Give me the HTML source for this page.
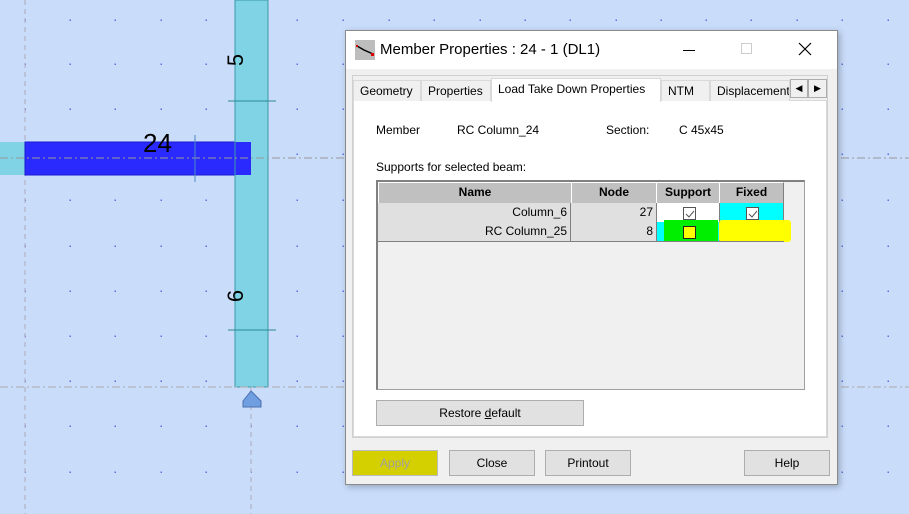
<!DOCTYPE html>
<html><head><meta charset="utf-8"><style>
*{margin:0;padding:0;box-sizing:border-box}
body{width:909px;height:514px;overflow:hidden;background:#c9dcfa;position:relative;font-family:"Liberation Sans",sans-serif;font-size:12px;color:#000}
.a{position:absolute}
.btn{position:absolute;background:#e1e1e1;border:1px solid #adadad;text-align:center;font-size:12px;line-height:24px}
.tab{position:absolute;top:80px;height:21px;border:1px solid #d9d9d9;border-bottom:none;background:#f0f0f0;font-size:12px;line-height:20px;padding-left:6px}
.cell{position:absolute;border-right:1px solid #808080;border-bottom:1px solid #808080;font-size:12px;line-height:18px}
.h{background:#c0c0c0;font-weight:bold;text-align:center;border:1px solid #808080;border-top:1px solid #fff;border-left:1px solid #fff}
.cb{position:absolute;width:13px;height:13px;border:1px solid #333;background:#fff}
</style></head><body>
<svg class="a" style="left:0;top:0" width="345" height="514">
<g fill="#6f7fe0">
</g>
<g id="dots"></g>
<line x1="25" y1="0" x2="25" y2="514" stroke="#aab" stroke-dasharray="5,4"/>
<line x1="251" y1="0" x2="251" y2="514" stroke="#aab" stroke-dasharray="5,4"/>
<rect x="0" y="142" width="25" height="33" fill="#7fd3e4"/>
<rect x="25" y="142" width="226" height="33" fill="#2a2aff" stroke="#1a1ad0"/>
<rect x="235" y="0" width="33" height="387" fill="#7fd3e4" stroke="#3a9aa8"/>
<rect x="235" y="142" width="16" height="33" fill="#2a2aff"/>
<line x1="235" y1="142" x2="235" y2="175" stroke="#3a9aa8"/>
<line x1="0" y1="158" x2="345" y2="158" stroke="#999" stroke-dasharray="8,3,2,3"/>
<line x1="0" y1="387" x2="345" y2="387" stroke="#aaa" stroke-dasharray="8,3,2,3"/>
<line x1="228" y1="101" x2="276" y2="101" stroke="#2a8a94"/>
<line x1="228" y1="330" x2="276" y2="330" stroke="#2a8a94"/>
<line x1="195" y1="135" x2="195" y2="182" stroke="#4a8ac0"/>
<text x="143" y="152" font-size="26" font-family="Liberation Sans">24</text>
<text transform="translate(243,60) rotate(-90)" font-size="22" font-family="Liberation Sans" text-anchor="middle">5</text>
<text transform="translate(243,296) rotate(-90)" font-size="22" font-family="Liberation Sans" text-anchor="middle">6</text>
<path d="M251 391 L243 401 L243 407 L261 407 L261 401 Z" fill="#6f9fe0" stroke="#4a70b0"/>
</svg>
<script>
var g=document.getElementById('dots'),s='';
var xs=[25,70,115,161,206,251,297,343],ys=[20,64,109,154,200,246,291,336,381,426,472];
for(var i of xs)for(var j of ys)s+='<rect x="'+(i-0.5)+'" y="'+(j-0.5)+'" width="1.5" height="1.5" fill="#6070e0"/>';
var xs2=[389,434,480,525,570,616,661,706,751,797,842,888];
for(var i of xs2)for(var j of ys)s+='<rect x="'+(i-0.5)+'" y="'+(j-0.5)+'" width="1.5" height="1.5" fill="#6070e0"/>';
g.innerHTML=s;
</script>
<svg class="a" style="left:345px;top:0" width="564" height="514"><g id="d2"></g>
<line x1="0" y1="158" x2="564" y2="158" stroke="#999" stroke-dasharray="8,3,2,3"/>
<line x1="0" y1="387" x2="564" y2="387" stroke="#aaa" stroke-dasharray="8,3,2,3"/>
</svg>
<script>
var g2=document.getElementById('d2'),t='';
for(var i of [389,434,480,525,570,616,661,706,751,797,842,888])for(var j of [20,64,109,154,200,246,291,336,381,426,472])t+='<rect x="'+(i-345.5)+'" y="'+(j-0.5)+'" width="1.5" height="1.5" fill="#6070e0"/>';
g2.innerHTML=t;
</script>
<!-- dialog -->
<div class="a" style="left:345px;top:30px;width:493px;height:455px;background:#f0f0f0;border:1px solid #8a8a8a;box-shadow:2px 2px 6px rgba(0,0,0,.25)">
<div class="a" style="left:0;top:0;width:491px;height:38px;background:#fff"></div>
</div>
<div class="a" style="left:355px;top:40px;width:20px;height:20px;background:#bdbdbd"></div>
<svg class="a" style="left:355px;top:40px" width="20" height="20"><path d="M2 6 L9 10 L18 14" stroke="#000" stroke-width="1.5" fill="none"/><rect x="1" y="5" width="2" height="2" fill="#d00"/><rect x="16" y="13" width="3" height="3" fill="#d00"/></svg>
<div class="a" style="left:380px;top:40px;font-size:15px;line-height:20px">Member Properties : 24 - 1 (DL1)</div>
<div class="a" style="left:683px;top:50px;width:12px;height:1px;background:#000"></div>
<div class="a" style="left:741px;top:43px;width:11px;height:11px;border:1px solid #ccc"></div>
<svg class="a" style="left:798px;top:42px" width="14" height="14"><path d="M1 1L13 13M13 1L1 13" stroke="#000" stroke-width="1.2"/></svg>
<!-- tab panel -->
<div class="a" style="left:352px;top:75px;width:476px;height:363px;border:1px solid #d0d0d0;background:#f0f0f0"></div>
<div class="a" style="left:353px;top:100px;width:474px;height:337px;background:#fff;border:1px solid #d9d9d9"></div>
<div class="tab" style="left:353px;width:68px">Geometry</div>
<div class="tab" style="left:421px;width:70px">Properties</div>
<div class="tab" style="left:491px;top:78px;height:24px;width:170px;background:#fff;border-color:#d9d9d9">Load Take Down Properties</div>
<div class="tab" style="left:661px;width:49px">NTM</div>
<div class="tab" style="left:710px;width:80px;overflow:hidden;white-space:nowrap">Displacement</div>
<div class="a" style="left:790px;top:79px;width:18px;height:19px;background:#f0f0f0;border:1px solid #adadad;font-size:9px;text-align:center;line-height:17px">◀</div>
<div class="a" style="left:808px;top:79px;width:19px;height:19px;background:#f0f0f0;border:1px solid #adadad;font-size:9px;text-align:center;line-height:17px">▶</div>
<div class="a" style="left:376px;top:123px">Member</div>
<div class="a" style="left:457px;top:123px">RC Column_24</div>
<div class="a" style="left:606px;top:123px">Section:</div>
<div class="a" style="left:679px;top:123px">C 45x45</div>
<div class="a" style="left:376px;top:160px">Supports for selected beam:</div>
<!-- grid -->
<div class="a" style="left:376px;top:180px;width:429px;height:210px;background:#f0f0f0;border:1px solid #a0a0a0;border-top:2px solid #808080;border-left:2px solid #808080"></div>
<div class="cell h" style="left:378px;top:182px;width:194px;height:22px">Name</div>
<div class="cell h" style="left:571px;top:182px;width:86px;height:22px">Node</div>
<div class="cell h" style="left:656px;top:182px;width:64px;height:22px">Support</div>
<div class="cell h" style="left:719px;top:182px;width:65px;height:22px">Fixed</div>
<div class="cell" style="left:378px;top:203px;width:193px;height:20px;background:#e0e0e0;text-align:right;padding-right:3px">Column_6</div>
<div class="cell" style="left:571px;top:203px;width:86px;height:20px;background:#e0e0e0;text-align:right;padding-right:3px">27</div>
<div class="cell" style="left:657px;top:203px;width:63px;height:20px;background:#fff"></div>
<div class="cell" style="left:720px;top:203px;width:64px;height:20px;background:#00ffff"></div>
<div class="cell" style="left:378px;top:222px;width:193px;height:20px;background:#e0e0e0;text-align:right;padding-right:3px">RC Column_25</div>
<div class="cell" style="left:571px;top:222px;width:86px;height:20px;background:#e0e0e0;text-align:right;padding-right:3px">8</div>
<div class="cell" style="left:657px;top:222px;width:63px;height:20px;background:#00ffff"></div>
<div class="a" style="left:664px;top:220px;width:54px;height:21px;background:#00ee00"></div>
<div class="a" style="left:719px;top:220px;width:72px;height:22px;background:#ffff00;border-radius:3px"></div>
<div class="a" style="left:720px;top:241px;width:64px;height:1px;background:#808080"></div>
<div class="cb" style="left:683px;top:207px;border-color:#555"></div>
<svg class="a" style="left:684px;top:208px" width="12" height="12"><path d="M2 6L5 9L10 3" stroke="#555" fill="none"/></svg>
<div class="cb" style="left:746px;top:207px;border-color:#555"></div>
<svg class="a" style="left:747px;top:208px" width="12" height="12"><path d="M2 6L5 9L10 3" stroke="#555" fill="none"/></svg>
<div class="cb" style="left:683px;top:226px;background:#ffff00;border-color:#222"></div>
<div class="btn" style="left:376px;top:400px;width:208px;height:26px">Restore <u>d</u>efault</div>
<div class="btn" style="left:352px;top:450px;width:86px;height:26px;color:#a0a0a0;background:#d4d000;border-color:#bbb">Apply</div>
<div class="btn" style="left:449px;top:450px;width:86px;height:26px">Close</div>
<div class="btn" style="left:545px;top:450px;width:86px;height:26px">Printout</div>
<div class="btn" style="left:744px;top:450px;width:86px;height:26px">Help</div>
</body></html>
